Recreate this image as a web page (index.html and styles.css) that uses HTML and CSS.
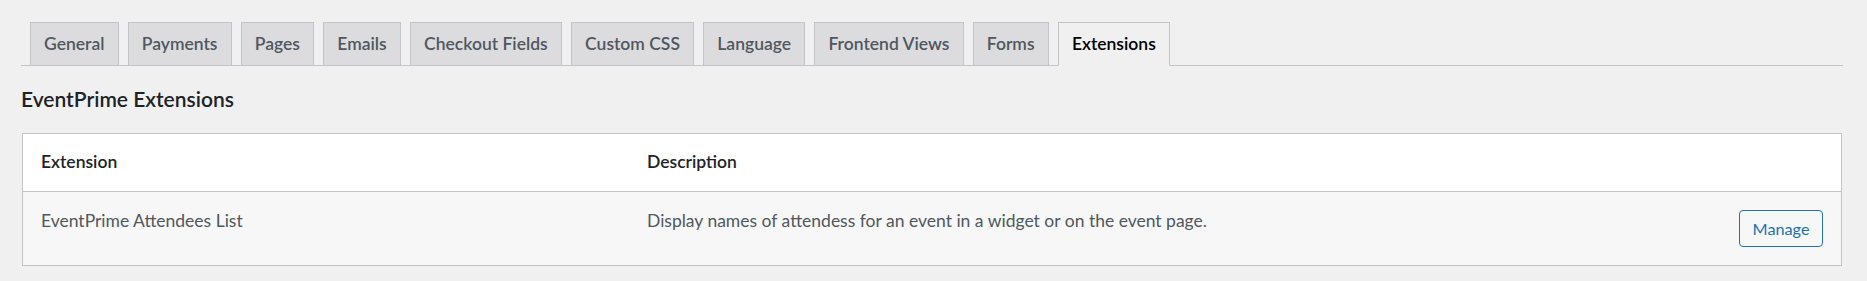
FILE: index.html
```html
<!DOCTYPE html>
<html lang="en">
<head>
<meta charset="utf-8">
<title>EventPrime Settings – Extensions</title>
<link rel="stylesheet" href="styles.css">
</head>
<body>
<div class="wrap">
  <nav class="nav-tab-wrapper">
    <a class="nav-tab" href="#">General</a>
    <a class="nav-tab" href="#">Payments</a>
    <a class="nav-tab" href="#">Pages</a>
    <a class="nav-tab" href="#">Emails</a>
    <a class="nav-tab" href="#">Checkout Fields</a>
    <a class="nav-tab" href="#">Custom CSS</a>
    <a class="nav-tab" href="#">Language</a>
    <a class="nav-tab" href="#">Frontend Views</a>
    <a class="nav-tab" href="#">Forms</a>
    <a class="nav-tab nav-tab-active" href="#">Extensions</a>
  </nav>
  <h2 class="section-title">EventPrime Extensions</h2>
  <table class="ext-table">
    <thead>
      <tr>
        <th class="col-name">Extension</th>
        <th class="col-desc">Description</th>
        <th class="col-action"></th>
      </tr>
    </thead>
    <tbody>
      <tr>
        <td class="col-name">EventPrime Attendees List</td>
        <td class="col-desc">Display names of attendess for an event in a widget or on the event page.</td>
        <td class="col-action"><button class="button" type="button">Manage</button></td>
      </tr>
    </tbody>
  </table>
</div>
</body>
</html>
```
FILE: styles.css
```css
html, body {
  margin: 0;
  padding: 0;
  background: #f0f0f1;
}

body {
  font-family: Lato, "Open Sans", sans-serif;
  color: #3c434a;
}

.wrap {
  padding: 0 24px 0 21px;
}

/* Tabs */
.nav-tab-wrapper {
  display: flex;
  align-items: flex-end;
  padding-top: 22px;
  border-bottom: 1px solid #c3c4c7;
}

.nav-tab {
  display: block;
  margin-left: 8.75px;
  margin-bottom: -1px;
  padding: 6px 13.3px;
  border: 1px solid #c3c4c7;
  background: #dcdcde;
  color: #50575e;
  font-size: 17.5px;
  font-weight: 600;
  line-height: 30px;
  text-decoration: none;
  white-space: nowrap;
}

.nav-tab-active {
  background: #f0f0f1;
  border-bottom-color: #f0f0f1;
  color: #000;
}

/* Heading */
.section-title {
  margin: 19px 0 20.7px;
  font-size: 21px;
  font-weight: 600;
  line-height: 27.3px;
  color: #1d2327;
}

/* Table */
.ext-table {
  width: calc(100% - 2px);
  margin: 0 1px;
  table-layout: fixed;
  border-collapse: separate;
  border-spacing: 0;
  border: 1px solid #c3c4c7;
  background: #fff;
}

.ext-table th,
.ext-table td {
  box-sizing: border-box;
  text-align: left;
  font-size: 17.5px;
  line-height: 26px;
}

.ext-table th {
  padding: 15.5px 18px;
  font-weight: 600;
  color: #1d2327;
  border-bottom: 1px solid #c3c4c7;
  background: #fff;
}

.ext-table td {
  padding: 16px 18px;
  vertical-align: top;
  color: #50575e;
  background: #f7f7f7;
}

.ext-table .col-name {
  width: 606px;
}

.ext-table .col-action {
  width: 140px;
}

.ext-table td.col-action {
  padding: 18px 18px 18px 0;
  vertical-align: middle;
  text-align: right;
}

/* Button */
.button {
  display: inline-block;
  box-sizing: border-box;
  height: 37px;
  margin: 0;
  padding: 0 12.5px;
  border: 1px solid #2271b1;
  border-radius: 4px;
  background: #f6f7f7;
  color: #2271b1;
  font-family: Lato, "Open Sans", sans-serif;
  font-size: 16.25px;
  line-height: 35px;
  vertical-align: top;
  cursor: pointer;
}
```
